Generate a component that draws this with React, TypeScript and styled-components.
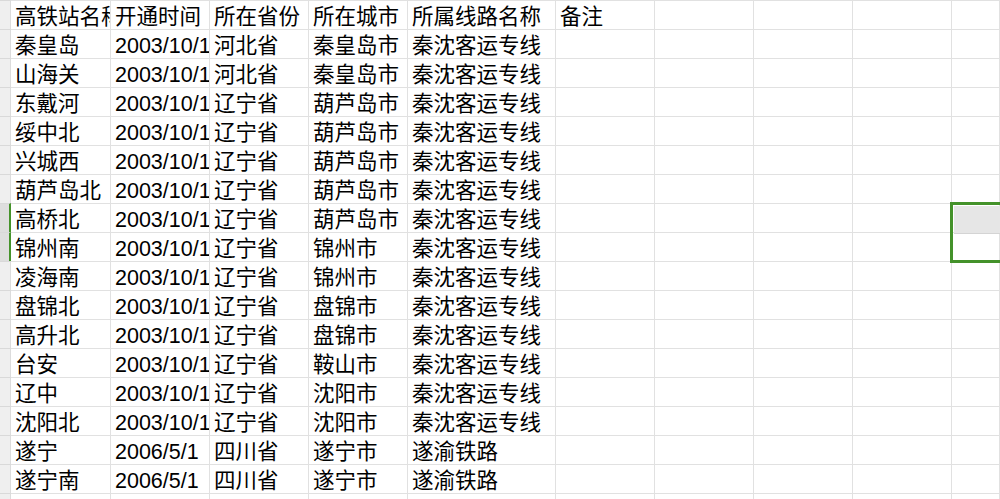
import React from "react";
import styled, { createGlobalStyle } from "styled-components";

const GlobalStyle = createGlobalStyle`
  html, body {
    margin: 0;
    padding: 0;
    background: #ffffff;
    overflow: hidden;
  }
  body {
    font-family: "Liberation Sans", "Noto Sans CJK SC", sans-serif;
  }
`;

const Sheet = styled.div`
  position: relative;
  width: 1000px;
  height: 499px;
  overflow: hidden;
  display: grid;
  grid-template-columns: 11px 100px 99px 99px 99px 148px 99px 99px 99px 99px 1fr;
  grid-auto-rows: 29px;
  align-content: start;
`;

const RowHead = styled.div<{ $selected?: boolean }>`
  box-sizing: border-box;
  height: 29px;
  border-top: 1px solid #d9d9d9;
  background: ${(p) => (p.$selected ? "#dedede" : "#efefef")};
  border-right: ${(p) => (p.$selected ? "2px solid #44922a" : "1px solid #dcdcdc")};
`;

const Cell = styled.div`
  box-sizing: border-box;
  height: 29px;
  border-top: 1px solid #e1e1e1;
  border-right: 1px solid #e1e1e1;
  padding: 3px 0 0 4px;
  font-size: 21.5px;
  line-height: 27px;
  color: #000000;
  white-space: nowrap;
  overflow: hidden;
`;

const Selection = styled.div`
  position: absolute;
  left: 950px;
  top: 202px;
  width: 70px;
  height: 61px;
  box-sizing: border-box;
  border: 3px solid #44922a;
  display: flex;
  flex-direction: column;
  pointer-events: none;
`;

const SelShade = styled.div`
  height: 27px;
  margin: 1px 0 0 1px;
  background: #e6e6e6;
  border-bottom: 1px solid #d4d4d4;
`;

const header = ["高铁站名称", "开通时间", "所在省份", "所在城市", "所属线路名称", "备注"];

const rows: string[][] = [
  ["秦皇岛", "2003/10/1", "河北省", "秦皇岛市", "秦沈客运专线"],
  ["山海关", "2003/10/1", "河北省", "秦皇岛市", "秦沈客运专线"],
  ["东戴河", "2003/10/1", "辽宁省", "葫芦岛市", "秦沈客运专线"],
  ["绥中北", "2003/10/1", "辽宁省", "葫芦岛市", "秦沈客运专线"],
  ["兴城西", "2003/10/1", "辽宁省", "葫芦岛市", "秦沈客运专线"],
  ["葫芦岛北", "2003/10/1", "辽宁省", "葫芦岛市", "秦沈客运专线"],
  ["高桥北", "2003/10/1", "辽宁省", "葫芦岛市", "秦沈客运专线"],
  ["锦州南", "2003/10/1", "辽宁省", "锦州市", "秦沈客运专线"],
  ["凌海南", "2003/10/1", "辽宁省", "锦州市", "秦沈客运专线"],
  ["盘锦北", "2003/10/1", "辽宁省", "盘锦市", "秦沈客运专线"],
  ["高升北", "2003/10/1", "辽宁省", "盘锦市", "秦沈客运专线"],
  ["台安", "2003/10/1", "辽宁省", "鞍山市", "秦沈客运专线"],
  ["辽中", "2003/10/1", "辽宁省", "沈阳市", "秦沈客运专线"],
  ["沈阳北", "2003/10/1", "辽宁省", "沈阳市", "秦沈客运专线"],
  ["遂宁", "2006/5/1", "四川省", "遂宁市", "遂渝铁路"],
  ["遂宁南", "2006/5/1", "四川省", "遂宁市", "遂渝铁路"],
  [],
];

const COLS = 10;

export default function App() {
  const all = [header, ...rows];
  return (
    <>
      <GlobalStyle />
      <Sheet>
        {all.map((r, ri) => (
          <React.Fragment key={ri}>
            <RowHead $selected={ri === 7 || ri === 8} />
            {Array.from({ length: COLS }).map((_, ci) => (
              <Cell key={ci}>{r[ci] ?? ""}</Cell>
            ))}
          </React.Fragment>
        ))}
        <Selection>
          <SelShade />
        </Selection>
      </Sheet>
    </>
  );
}
